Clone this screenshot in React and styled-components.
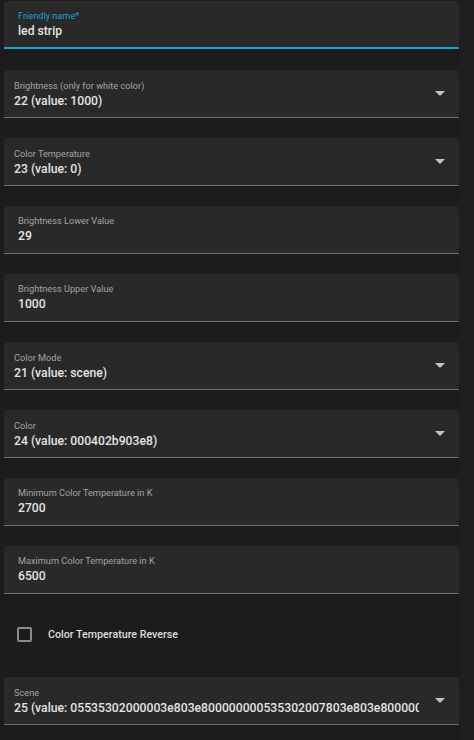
import React from "react";
import styled, { createGlobalStyle } from "styled-components";

const GlobalStyle = createGlobalStyle`
    html, body {
        margin: 0;
        padding: 0;
        background: #1c1c1c;
        font-family: Roboto, "Noto Sans", "Liberation Sans", sans-serif;
    }
`;

const fields = [
    { kind: "select", label: "Brightness (only for white color)", value: "22 (value: 1000)" },
    { kind: "select", label: "Color Temperature", value: "23 (value: 0)" },
    { kind: "text", label: "Brightness Lower Value", value: "29" },
    { kind: "text", label: "Brightness Upper Value", value: "1000" },
    { kind: "select", label: "Color Mode", value: "21 (value: scene)" },
    { kind: "select", label: "Color", value: "24 (value: 000402b903e8)" },
    { kind: "text", label: "Minimum Color Temperature in K", value: "2700" },
    { kind: "text", label: "Maximum Color Temperature in K", value: "6500" },
];

function Field({ kind, label, value, focused }) {
    return (
        <FieldBox focused={focused}>
            <FieldText indent={kind === "text" ? 14 : 10}>
                <Label focused={focused}>{label}</Label>
                <Value>{value}</Value>
            </FieldText>
            {kind === "select" && (
                <Arrow viewBox="0 0 10 5">
                    <path d="M0 0 L10 0 L5 5 Z" fill="#c4c4c4" />
                </Arrow>
            )}
        </FieldBox>
    );
}

function App() {
    return (
        <>
            <GlobalStyle />
            <Page>
                <Form>
                    <Field kind="text" label="Friendly name*" value="led strip" focused />
                    {fields.map((f) => (
                        <Field key={f.label} {...f} />
                    ))}
                    <CheckRow>
                        <CheckBox />
                        <CheckLabel>Color Temperature Reverse</CheckLabel>
                    </CheckRow>
                    <Field
                        kind="select"
                        label="Scene"
                        value="25 (value: 05535302000003e803e800000000535302007803e803e80000000000)"
                    />
                </Form>
                <Edge />
            </Page>
        </>
    );
}

export default App;

const Page = styled.div`
    display: flex;
    width: 474px;
    height: 740px;
    overflow: hidden;
`;
const Form = styled.div`
    width: 455px;
    padding: 1px 0 0 4px;
    display: flex;
    flex-direction: column;
    gap: 20px;
`;
const Edge = styled.div`
    flex: 1;
    background: #1f1f1f;
    margin-left: 1px;
`;
const FieldBox = styled.div`
    height: 48px;
    box-sizing: border-box;
    flex-shrink: 0;
    background: #292929;
    border-radius: 4px 4px 0 0;
    border-bottom: ${(p) => (p.focused ? "2px solid #1a9fdb" : "1px solid #6e6e6e")};
    display: flex;
    align-items: center;
    padding-right: 15px;
    &:first-child {
        margin-bottom: 1px;
    }
`;
const FieldText = styled.div`
    flex: 1;
    min-width: 0;
    padding-left: ${(p) => p.indent}px;
    padding-top: ${(p) => (p.indent === 14 ? 0 : 1)}px;
    display: flex;
    flex-direction: column;
    gap: 1px;
`;
const Label = styled.span`
    font-size: 9.2px;
    line-height: 12px;
    color: ${(p) => (p.focused ? "#1a9fdb" : "#a3a3a3")};
`;
const Value = styled.span`
    font-size: 12.2px;
    line-height: 16px;
    font-weight: 500;
    color: #e4e4e4;
    white-space: nowrap;
    overflow: hidden;
    margin-right: 16px;
`;
const Arrow = styled.svg`
    width: 10px;
    height: 5px;
    flex-shrink: 0;
    margin-right: -1px;
`;
const CheckRow = styled.div`
    height: 40px;
    margin-bottom: 3px;
    display: flex;
    align-items: center;
    padding-left: 13px;
`;
const CheckBox = styled.span`
    width: 15px;
    height: 15px;
    box-sizing: border-box;
    border: 2px solid #8a8a8a;
    border-radius: 2px;
    margin-right: 16px;
`;
const CheckLabel = styled.span`
    font-size: 10.7px;
    font-weight: 500;
    color: #dedede;
`;
